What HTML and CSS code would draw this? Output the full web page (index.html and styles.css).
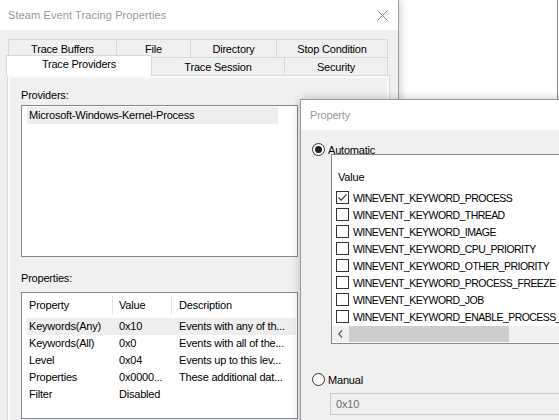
FILE: index.html
```html
<!DOCTYPE html>
<html>
<head>
<meta charset="utf-8">
<link rel="stylesheet" href="styles.css">
</head>
<body>
<div class="desk">
  <div class="win back"></div>

  <div class="win main">
    <div class="titlebar">
      <span class="title">Steam Event Tracing Properties</span>
      <svg class="close" width="11" height="11" viewBox="0 0 11 11"><path d="M0.5 0.5L10.5 10.5M10.5 0.5L0.5 10.5" stroke="#8c8c8c" stroke-width="1" fill="none"/></svg>
    </div>
    <div class="mbody">
      <div class="tabrow row1">
        <div class="tab w1">Trace Buffers</div>
        <div class="tab w2">File</div>
        <div class="tab w3">Directory</div>
        <div class="tab w4">Stop Condition</div>
      </div>
      <div class="tabrow row2">
        <div class="tab sel w5">Trace Providers</div>
        <div class="tab w6">Trace Session</div>
        <div class="tab w7">Security</div>
      </div>
      <div class="panel">
        <div class="label">Providers:</div>
        <div class="listbox">
          <div class="item">Microsoft-Windows-Kernel-Process</div>
        </div>
        <div class="label l2">Properties:</div>
        <div class="listview">
          <div class="lvhead">
            <div class="hc c1">Property</div>
            <div class="hc c2">Value</div>
            <div class="hc c3">Description</div>
          </div>
          <div class="lvrow hl"><span>Keywords(Any)</span><span>0x10</span><span>Events with any of th...</span></div>
          <div class="lvrow"><span>Keywords(All)</span><span>0x0</span><span>Events with all of the...</span></div>
          <div class="lvrow"><span>Level</span><span>0x04</span><span>Events up to this lev...</span></div>
          <div class="lvrow"><span>Properties</span><span>0x0000...</span><span>These additional dat...</span></div>
          <div class="lvrow"><span>Filter</span><span>Disabled</span><span></span></div>
        </div>
      </div>
    </div>
  </div>

  <div class="win popup">
    <div class="ptitle">Property</div>
    <div class="pbody">
      <div class="radio-row auto">
        <span class="radio on"></span><span>Automatic</span>
      </div>
      <div class="vlist">
        <div class="vhead">Value</div>
        <div class="vrow"><span class="cb"><svg width="11" height="11" viewBox="0 0 11 11"><path d="M1.5 5.5L4.2 8.2L9.6 2.3" stroke="#333" stroke-width="1.1" fill="none"/></svg></span><span class="kw">WINEVENT_KEYWORD_PROCESS</span></div>
        <div class="vrow"><span class="cb"></span><span class="kw">WINEVENT_KEYWORD_THREAD</span></div>
        <div class="vrow"><span class="cb"></span><span class="kw">WINEVENT_KEYWORD_IMAGE</span></div>
        <div class="vrow"><span class="cb"></span><span class="kw">WINEVENT_KEYWORD_CPU_PRIORITY</span></div>
        <div class="vrow"><span class="cb"></span><span class="kw">WINEVENT_KEYWORD_OTHER_PRIORITY</span></div>
        <div class="vrow"><span class="cb"></span><span class="kw">WINEVENT_KEYWORD_PROCESS_FREEZE</span></div>
        <div class="vrow"><span class="cb"></span><span class="kw">WINEVENT_KEYWORD_JOB</span></div>
        <div class="vrow"><span class="cb"></span><span class="kw">WINEVENT_KEYWORD_ENABLE_PROCESS_</span></div>
        <div class="hscroll">
          <div class="arrow"><svg width="5" height="8" viewBox="0 0 5 8"><path d="M4 0.5L0.8 4L4 7.5" stroke="#606060" stroke-width="1.2" fill="none"/></svg></div>
          <div class="thumb"></div>
        </div>
      </div>
      <div class="radio-row manual">
        <span class="radio"></span><span>Manual</span>
      </div>
      <div class="field">0x10</div>
    </div>
  </div>
</div>
</body>
</html>
```

FILE: styles.css
```css
* { box-sizing: border-box; }
html, body { margin: 0; padding: 0; }
body {
  width: 559px;
  height: 420px;
  overflow: hidden;
  background: #ffffff;
  font-family: "Liberation Sans", Arial, sans-serif;
  font-size: 11px;
  letter-spacing: -0.2px;
  color: #000;
}
.desk { position: relative; width: 559px; height: 420px; overflow: hidden; }
.win { position: absolute; }

/* back window (top right) */
.back {
  left: 390px; top: 0; width: 168px; height: 100px;
  background: #fff;
  border-right: 1px solid #8a8a8a;
}

/* main window */
.main {
  left: 0; top: 0; width: 399px; height: 460px;
  background: #f0f0f0;
  border-right: 1px solid #a0a0a0;
  box-shadow: 2px 0 7px rgba(0,0,0,0.18);
}
.titlebar {
  height: 30px;
  background: #fff;
  display: flex;
  align-items: center;
  justify-content: space-between;
  padding: 0 10px 0 8px;
}
.title { color: #999; font-size: 11px; letter-spacing: 0.1px; }
.close { display: block; margin-top: 1px; }

.mbody { padding-top: 9px; }
.tabrow { display: flex; height: 18px; }
.row1 { margin-left: 8px; }
.row2 { margin-left: 6px; align-items: flex-start; }
.tab {
  height: 18px;
  border: 1px solid #d9d9d9;
  border-bottom: none;
  background: #f0f0f0;
  text-align: center;
  line-height: 18px;
  margin-left: -1px;
}
.tab:first-child { margin-left: 0; }
.w1 { width: 109px; }
.w2 { width: 75px; }
.w3 { width: 87px; }
.w4 { width: 112px; }
.w5 { width: 146px; }
.w6 { width: 134px; margin-left: -1px; }
.w7 { width: 104px; }
.row2 .tab:not(.sel) { margin-left: -1px; line-height: 18px; }
.tab.sel {
  position: relative;
  z-index: 2;
  margin-top: -2px;
  height: 21px;
  background: #fff;
  line-height: 15px;
  padding-top: 1px;
}

.panel {
  margin-left: 7px;
  width: 383px;
  height: 360px;
  border: 1px solid #d9d9d9;
  background: #f0f0f0;
  box-shadow: inset 0 0 0 2px #fafafa;
  padding: 12px 0 0 13px;
}
.label { line-height: 14px; height: 14px; }
.l2 { margin-top: 14px; }
.listbox {
  margin-top: 3px;
  width: 277px;
  height: 152px;
  border: 1px solid #828790;
  background: #fff;
  padding: 1px 0 0 5px;
}
.item {
  width: 251px;
  height: 17px;
  line-height: 17px;
  padding-left: 2px;
  background: #eeeeee;
}
.listview {
  margin-top: 7px;
  width: 277px;
  height: 127px;
  border: 1px solid #828790;
  background: #fff;
}
.lvhead {
  display: grid;
  grid-template-columns: 91px 59px 1fr;
  height: 25px;
  align-items: center;
}
.hc { line-height: 19px; height: 19px; }
.c1 { padding-left: 7px; border-right: 1px solid #e5e5e5; }
.c2 { padding-left: 6px; border-right: 1px solid #e5e5e5; }
.c3 { padding-left: 7px; }
.lvrow {
  display: grid;
  grid-template-columns: 86px 59px 1fr;
  margin-left: 5px;
  margin-right: 1px;
  height: 17px;
  line-height: 17px;
  white-space: nowrap;
  overflow: hidden;
}
.lvrow span:nth-child(1) { padding-left: 2px; }
.lvrow span:nth-child(2) { padding-left: 6px; }
.lvrow span:nth-child(3) { padding-left: 7px; }
.lvrow.hl { background: #eeeeee; }

/* popup */
.popup {
  left: 300px; top: 99px; width: 320px; height: 360px;
  border: 1px solid #9a9a9a;
  background: #f0f0f0;
  box-shadow: 0 0 9px rgba(0,0,0,0.22);
}
.ptitle {
  height: 30px;
  background: #fff;
  color: #999;
  padding-left: 9px;
  line-height: 30px;
}
.pbody { padding: 13px 0 0 11px; }
.radio-row {
  display: flex;
  align-items: center;
  height: 13px;
  gap: 3px;
}
.auto { margin-bottom: -2px; }
.radio {
  width: 13px; height: 13px;
  border: 1px solid #333;
  border-radius: 50%;
  background: #fff;
  display: flex;
  align-items: center;
  justify-content: center;
}
.radio.on::after {
  content: "";
  width: 7px; height: 7px;
  border-radius: 50%;
  background: #222;
}
.vlist {
  margin-left: 19px;
  width: 300px;
  height: 190px;
  border: 1px solid #828790;
  background: #fff;
}
.vhead {
  height: 34px;
  padding: 15px 0 0 6px;
  line-height: 14px;
}
.vrow {
  display: flex;
  align-items: center;
  height: 17px;
  padding-left: 4px;
  gap: 4px;
  white-space: nowrap;
  overflow: hidden;
}
.cb {
  flex: none;
  width: 13px; height: 13px;
  border: 1px solid #333;
  background: #fff;
  display: flex;
  align-items: center;
  justify-content: center;
}
.cb svg { display: block; }
.kw { font-size: 10.5px; letter-spacing: -0.56px; }
.hscroll {
  margin-top: 1px;
  height: 16px;
  background: #f0f0f0;
  display: flex;
}
.arrow {
  width: 17px;
  display: flex;
  align-items: center;
  justify-content: center;
}
.arrow svg { display: block; }
.thumb { width: 160px; background: #cdcdcd; }
.manual { margin-top: 29px; }
.field {
  margin: 7px 0 0 18px;
  width: 300px;
  height: 22px;
  border: 1px solid #cccccc;
  background: #f0f0f0;
  color: #6d6d6d;
  padding-left: 5px;
  line-height: 20px;
}
```
